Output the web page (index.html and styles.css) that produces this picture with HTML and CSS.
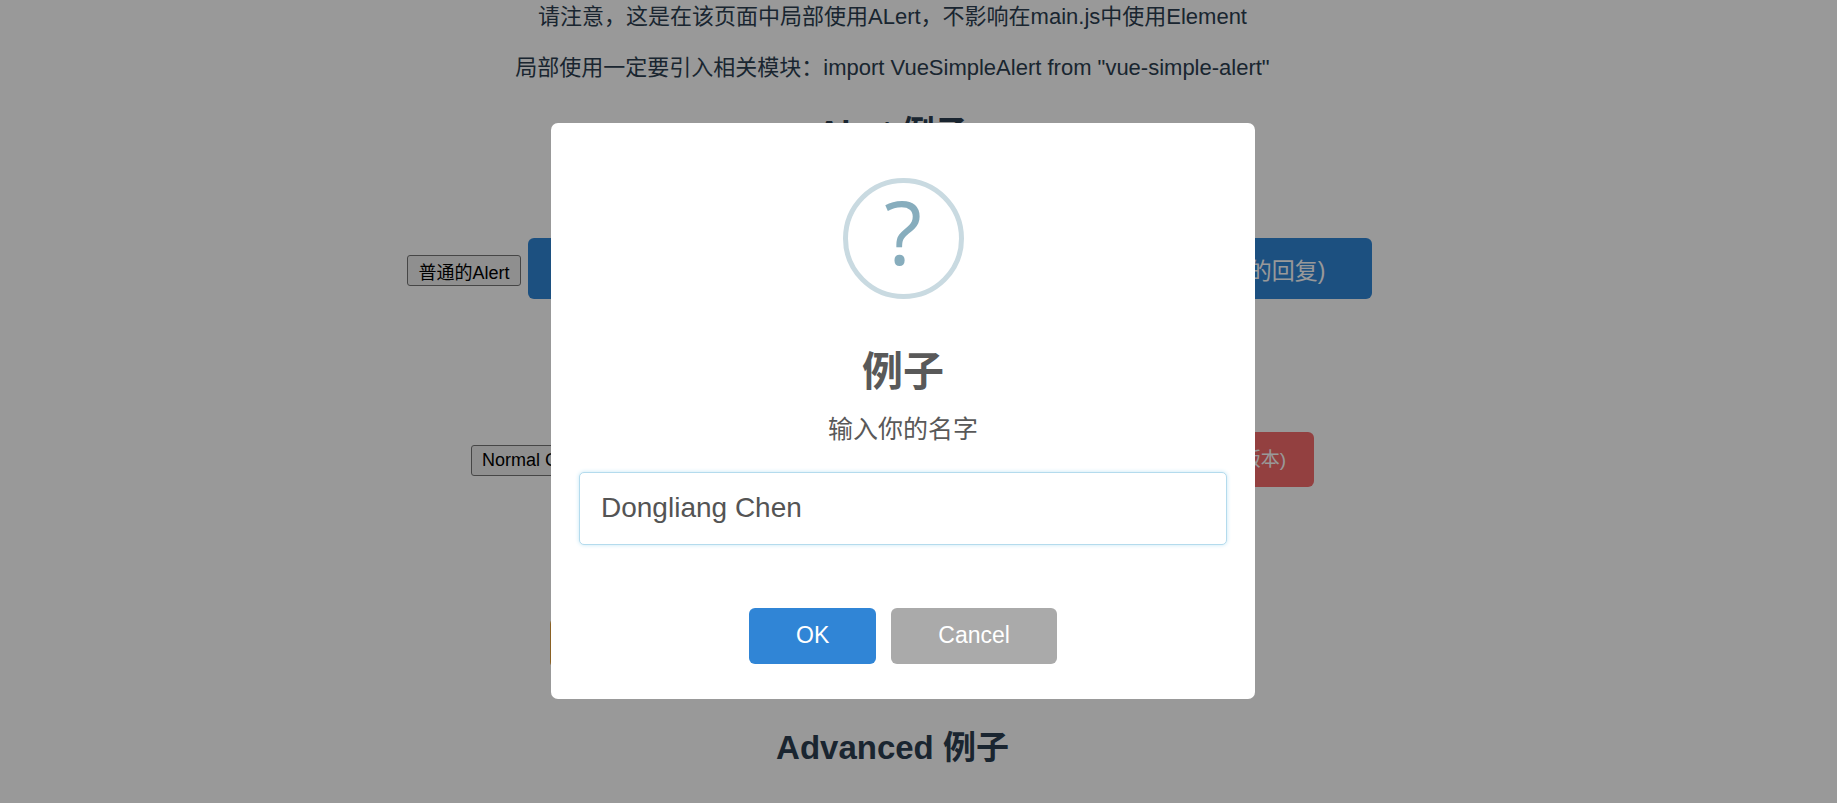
FILE: index.html
```html
<!DOCTYPE html>
<html lang="zh-CN">
<head>
    <meta charset="utf-8">
    <title>Vue Simple Alert</title>
    <link rel="stylesheet" href="styles.css">
</head>
<body>
    <main class="page">
        <p>请注意，这是在该页面中局部使用ALert，不影响在main.js中使用Element</p>
        <p>局部使用一定要引入相关模块：import VueSimpleAlert from "vue-simple-alert"</p>

        <h2>Alert 例子</h2>
        <div class="row row-alert">
            <button type="button" class="plain">普通的Alert</button>
            <button type="button" class="btn btn-blue">Alert (点击后会得到你的回复)</button>
        </div>
        <div class="row row-confirm">
            <button type="button" class="plain">Normal Confirm</button>
            <button type="button" class="btn btn-red">Confirm (Element版本)</button>
        </div>
        <div class="row row-prompt">
            <button type="button" class="btn btn-orange">Prompt</button>
        </div>

        <h2 class="advanced">Advanced 例子</h2>
    </main>

    <div class="overlay">
        <form class="modal" role="dialog" aria-labelledby="modalTitle">
            <div class="icon">?</div>
            <h2 class="title" id="modalTitle">例子</h2>
            <label class="content" for="nameInput">输入你的名字</label>
            <input type="text" class="input" id="nameInput" value="Dongliang Chen">
            <div class="actions">
                <button type="button" class="action action-ok">OK</button>
                <button type="button" class="action action-cancel">Cancel</button>
            </div>
        </form>
    </div>
</body>
</html>
```

FILE: styles.css
```css
* {
    box-sizing: border-box;
}
body {
    margin: 0;
    height: 100vh;
    overflow: hidden;
    background: #fff;
    color: #2c3e50;
    font-family: "Liberation Sans", Arial, "Noto Sans CJK SC", sans-serif;
    font-size: 22px;
}
button,
input {
    font-family: inherit;
}

/* page behind the dialog */
.page {
    padding: 1px 52px 0 0;
    text-align: center;
}
.page p {
    margin: 0 0 20px;
    line-height: 31px;
}
.page h2 {
    margin: 28px 0;
    font-size: 33px;
    line-height: 44px;
}
.page .advanced {
    margin-top: 58px;
}
.row {
    display: flex;
    align-items: baseline;
    justify-content: center;
    gap: 7px;
}
.row-alert {
    margin-top: 83px;
    padding-right: 6px;
}
.row-confirm {
    margin-top: 133px;
}
.row-prompt {
    margin-top: 131px;
}
.plain {
    height: 31px;
    padding: 0 10px;
    border: 1px solid #767676;
    border-radius: 3px;
    background: #efefef;
    color: #000;
    font-size: 18px;
}
.btn {
    border: 0;
    border-radius: 6px;
    color: #fff;
}
.btn-blue {
    width: 844px;
    height: 61px;
    padding-right: 46px;
    background: #3085d6;
    font-size: 23px;
    text-align: right;
}
.btn-red {
    width: 688px;
    height: 55px;
    padding: 0 28px 4px 0;
    background: #f56c6c;
    font-size: 19px;
    text-align: right;
}
.btn-orange {
    width: 685px;
    height: 50px;
    background: #e6a23c;
    font-size: 19px;
}

/* dialog */
.overlay {
    position: fixed;
    inset: 0;
    display: flex;
    align-items: center;
    justify-content: center;
    padding: 18px 31px 0 0;
    background: rgba(0, 0, 0, 0.4);
}
.modal {
    display: flex;
    flex-direction: column;
    align-items: center;
    width: 704px;
    padding: 28px;
    padding-bottom: 35px;
    border-radius: 7px;
    background: #fff;
    color: #595959;
}
.icon {
    width: 121px;
    height: 121px;
    margin: 27px 0 43px;
    border: 5px solid #c9dae1;
    border-radius: 50%;
    color: #87adbd;
    font-family: "Open Sans", "Noto Sans", sans-serif;
    font-size: 88px;
    font-weight: 500;
    line-height: 97px;
    text-align: center;
}
.title {
    margin: 0 0 9px;
    font-size: 41px;
    line-height: 60px;
}
.content {
    font-size: 25px;
    line-height: 37px;
}
.input {
    width: 100%;
    height: 73px;
    margin-top: 24px;
    padding: 0 21px;
    border: 1px solid #b4dbed;
    border-radius: 5px;
    outline: 0;
    box-shadow: 0 0 4px #c4e6f5;
    color: #545454;
    font-size: 28px;
}
.actions {
    display: flex;
    gap: 15px;
    margin-top: 63px;
}
.action {
    height: 56px;
    padding: 0 47px;
    border: 0;
    border-radius: 6px;
    color: #fff;
    font-size: 23px;
}
.action-ok {
    background: #3085d6;
}
.action-cancel {
    background: #aaa;
}
```
